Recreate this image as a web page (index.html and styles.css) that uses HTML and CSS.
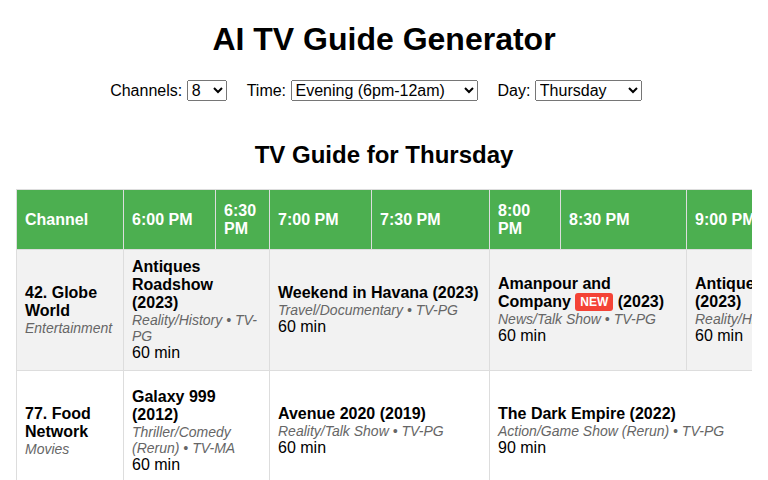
FILE: index.html
```html
<!DOCTYPE html>
<html lang="en">
<head>
<meta charset="utf-8">
<title>AI TV Guide Generator</title>
<link rel="stylesheet" href="styles.css">
</head>
<body>
<h1 class="title">AI TV Guide Generator</h1>
<div class="controls">
  <label class="ctl">Channels: <select class="sel"><option>4</option><option selected>8</option><option>12</option><option>16</option></select></label>
  <label class="ctl">Time: <select class="sel"><option>Morning (6am-12pm)</option><option>Afternoon (12pm-6pm)</option><option selected>Evening (6pm-12am)</option><option>Late Night (12am-6am)</option></select></label>
  <label class="ctl">Day: <select class="sel"><option>Monday</option><option>Tuesday</option><option>Wednesday</option><option selected>Thursday</option><option>Friday</option><option>Saturday</option><option>Sunday</option></select></label>
</div>
<h2 class="subtitle">TV Guide for Thursday</h2>
<div class="guide-wrap">
<table class="guide">
  <colgroup>
    <col class="w-ch"><col class="w-600"><col class="w-630"><col class="w-700"><col class="w-730"><col class="w-800"><col class="w-830"><col class="w-900"><col class="w-930"><col class="w-rest"><col class="w-rest"><col class="w-rest"><col class="w-rest">
  </colgroup>
  <thead>
    <tr>
      <th>Channel</th><th>6:00 PM</th><th>6:30 PM</th><th>7:00 PM</th><th>7:30 PM</th><th>8:00 PM</th><th>8:30 PM</th><th>9:00 PM</th><th>9:30 PM</th><th>10:00 PM</th><th>10:30 PM</th><th>11:00 PM</th><th>11:30 PM</th>
    </tr>
  </thead>
  <tbody>
    <tr class="row-alt">
      <td><div class="ch-name">42. Globe World</div><div class="ch-cat">Entertainment</div></td>
      <td colspan="2"><div class="show">Antiques Roadshow (2023)</div><div class="genre">Reality/History • TV-PG</div><div class="dur">60 min</div></td>
      <td colspan="2"><div class="show">Weekend in Havana (2023)</div><div class="genre">Travel/Documentary • TV-PG</div><div class="dur">60 min</div></td>
      <td colspan="2"><div class="show">Amanpour and Company <span class="badge">NEW</span> (2023)</div><div class="genre">News/Talk Show • TV-PG</div><div class="dur">60 min</div></td>
      <td colspan="2"><div class="show">Antiques Roadshow (2023)</div><div class="genre">Reality/History • TV-PG</div><div class="dur">60 min</div></td>
      <td colspan="2"><div class="show">Galaxy 999 (2012)</div><div class="genre">Drama • TV-14</div><div class="dur">60 min</div></td>
      <td colspan="2"><div class="show">Avenue 2020 (2019)</div><div class="genre">Reality/Talk Show • TV-PG</div><div class="dur">60 min</div></td>
    </tr>
    <tr class="row-tall">
      <td><div class="ch-name">77. Food Network</div><div class="ch-cat">Movies</div></td>
      <td colspan="2"><div class="show">Galaxy 999 (2012)</div><div class="genre">Thriller/Comedy (Rerun) • TV-MA</div><div class="dur">60 min</div></td>
      <td colspan="2"><div class="show">Avenue 2020 (2019)</div><div class="genre">Reality/Talk Show • TV-PG</div><div class="dur">60 min</div></td>
      <td colspan="3"><div class="show">The Dark Empire (2022)</div><div class="genre">Action/Game Show (Rerun) • TV-PG</div><div class="dur">90 min</div></td>
      <td colspan="3"><div class="show">Weekend in Havana (2023)</div><div class="genre">Travel/Documentary • TV-PG</div><div class="dur">90 min</div></td>
      <td colspan="2"><div class="show">Antiques Roadshow (2023)</div><div class="genre">Reality/History • TV-PG</div><div class="dur">60 min</div></td>
    </tr>
  </tbody>
</table>
</div>
</body>
</html>
```

FILE: styles.css
```css
html, body {
  margin: 0;
  background: #fff;
}
body {
  padding: 0 16px;
  font-family: "Liberation Sans", Arial, sans-serif;
  color: #000;
  font-size: 16px;
}
.title {
  text-align: center;
  font-size: 32px;
  font-weight: bold;
  margin: 21px 0 22px;
}
.controls {
  display: flex;
  justify-content: center;
  align-items: center;
  gap: 4px;
  margin-bottom: 40px;
}
.ctl {
  font-size: 16px;
  margin-right: 16px;
}
.sel {
  font-family: "Liberation Sans", Arial, sans-serif;
  font-size: 16px;
}
.subtitle {
  text-align: center;
  font-size: 24px;
  font-weight: bold;
  margin: 0 0 20px;
}
.guide-wrap {
  overflow: hidden;
}
.guide {
  border-collapse: collapse;
  table-layout: fixed;
  width: 1463px;
}
.w-ch { width: 107px; }
.w-600 { width: 92px; }
.w-630 { width: 54px; }
.w-700 { width: 102px; }
.w-730 { width: 118px; }
.w-800 { width: 71px; }
.w-830 { width: 126px; }
.w-900 { width: 90px; }
.w-930 { width: 103px; }
.w-rest { width: 150px; }
.guide th, .guide td {
  border: 1px solid #ddd;
  text-align: left;
  vertical-align: middle;
  padding: 8px;
}
.guide th {
  background: #4caf50;
  color: #fff;
  font-weight: bold;
  padding: 11.5px 8px;
}
.row-alt td {
  background: #f2f2f2;
}
.row-tall {
  height: 121px;
}
.ch-name, .show {
  font-weight: bold;
}
.ch-cat, .genre {
  font-style: italic;
  font-size: 14px;
  color: #666;
}
.badge {
  background: #f44336;
  color: #fff;
  font-size: 12px;
  font-weight: bold;
  padding: 2px 5px;
  border-radius: 3px;
  vertical-align: 1px;
}
```
